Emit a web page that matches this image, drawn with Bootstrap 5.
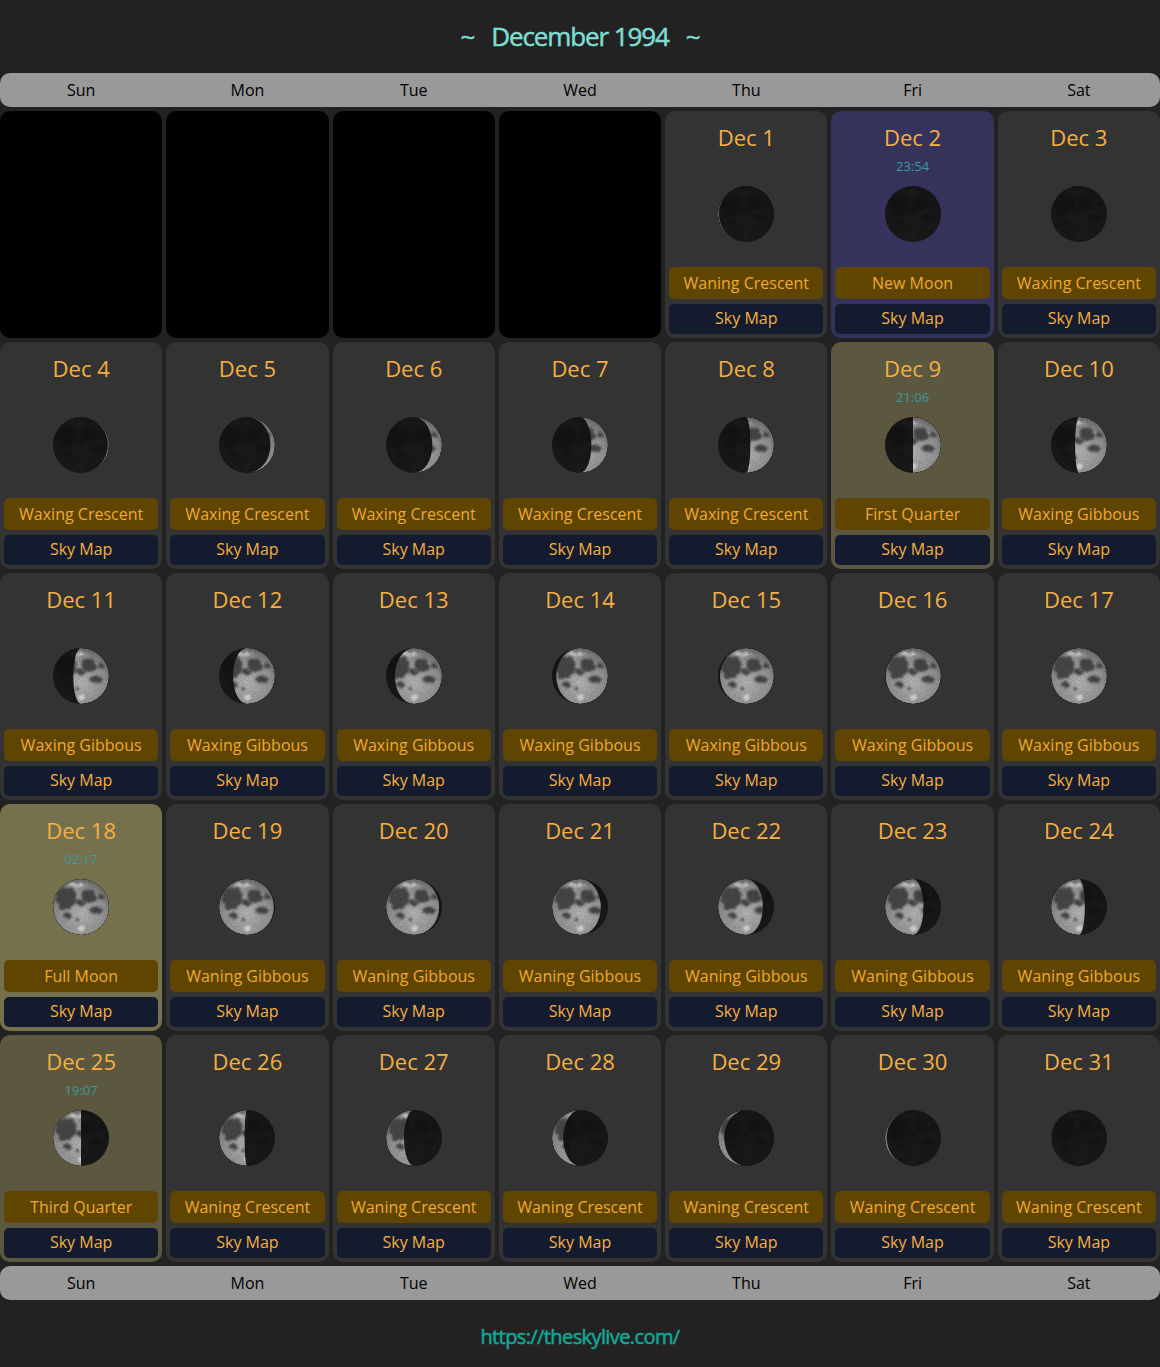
<!DOCTYPE html>
<html lang="en">
<head>
    <meta charset="UTF-8">
    <meta name="viewport" content="width=device-width, initial-scale=1.0">
    <title>Moon Phases December 1994</title>
    <link href="https://cdn.jsdelivr.net/npm/bootstrap@5.3.0/dist/css/bootstrap.min.css" rel="stylesheet">
    <style>
        body {
            background-color: #222;
            font-family: "Open Sans", "Noto Sans", sans-serif;
            font-size: 16px;
            overflow-x: hidden;
        }
        .cal-title {
            height: 73px;
            margin: 0;
            color: #7fdcd3;
            font-size: 26px;
            font-weight: 400;
            letter-spacing: -1.1px;
            -webkit-text-stroke: 0.5px #7fdcd3;
        }
        .cal-title span { margin: 0 17px; }
        .week-bar {
            display: grid;
            grid-template-columns: repeat(7, 1fr);
            gap: 4px;
            height: 34px;
            background-color: #999;
            border-radius: 10px;
            color: #000;
            line-height: 34px;
            text-align: center;
        }
        .month-grid {
            display: grid;
            grid-template-columns: repeat(7, 1fr);
            grid-auto-rows: 227px;
            gap: 4px;
            margin: 4px 0;
        }
        .day-box {
            display: flex;
            flex-direction: column;
            padding: 4px;
            background-color: #333;
            border-radius: 10px;
            text-align: center;
        }
        .day-box.blank { background-color: #000; }
        .day-box.new-moon { background-color: #35335c; }
        .day-box.quarter { background-color: #5c5840; }
        .day-box.full-moon { background-color: #75714d; }
        .day-date {
            margin-top: 5px;
            height: 34px;
            color: #f5b041;
            font-size: 22px;
            line-height: 34px;
        }
        .day-time {
            height: 30px;
            color: #3a9a9c;
            font-size: 13px;
            line-height: 24px;
        }
        .moon-pic {
            display: block;
            width: 56px;
            height: 56px;
            margin: 2px auto 0;
        }
        .phase-name {
            height: 32px;
            margin-bottom: 5px;
            background-color: #5f4500;
            border-radius: 5px;
            color: #f0aa2e;
            line-height: 32px;
        }
        .map-btn {
            height: 30px;
            padding: 0;
            background-color: #141b2e;
            border: 0;
            border-radius: 5px;
            color: #f5b041;
            font-size: 16px;
            line-height: 28px;
        }
        .map-btn:hover { background-color: #1d2640; color: #f5b041; }
        .site-link {
            height: 67px;
            padding-top: 6px;
            color: #14a899;
            font-size: 20px;
            letter-spacing: -0.6px;
            -webkit-text-stroke: 0.5px #14a899;
            text-decoration: none;
        }
    </style>
</head>
<body>
    <svg width="0" height="0" class="d-block" aria-hidden="true">
        <defs>
            <filter id="grain" x="0" y="0" width="100%" height="100%">
                <feTurbulence type="fractalNoise" baseFrequency="0.9" numOctaves="2" seed="4" result="noise"/>
                <feColorMatrix in="noise" type="matrix" values="0 0 0 0 0  0 0 0 0 0  0 0 0 0 0  0 0 0 0.7 -0.26" result="spots"/>
                <feComposite in="spots" in2="SourceGraphic" operator="in" result="clipped"/>
                <feMerge>
                    <feMergeNode in="SourceGraphic"/>
                    <feMergeNode in="clipped"/>
                </feMerge>
            </filter>
            <filter id="soft" x="-30%" y="-30%" width="160%" height="160%">
                <feTurbulence type="fractalNoise" baseFrequency="0.18" numOctaves="2" seed="9" result="warp"/>
                <feDisplacementMap in="SourceGraphic" in2="warp" scale="6" xChannelSelector="R" yChannelSelector="G" result="rough"/>
                <feGaussianBlur in="rough" stdDeviation="1.2"/>
            </filter>
            <filter id="edge"><feGaussianBlur stdDeviation="0.5"/></filter>
            <radialGradient id="limb" cx="50%" cy="62%" r="58%">
                <stop offset="0" stop-color="#b4b4b4"/>
                <stop offset="0.75" stop-color="#929292"/>
                <stop offset="1" stop-color="#727272"/>
            </radialGradient>
            <clipPath id="disc"><circle cx="28" cy="28" r="28"/></clipPath>
            <g id="moonFace" clip-path="url(#disc)">
                <g filter="url(#grain)">
                    <circle cx="28" cy="28" r="28" fill="url(#limb)"/>
                    <g fill="#474747" filter="url(#soft)">
                        <ellipse cx="13" cy="19" rx="10" ry="11"/>
                        <ellipse cx="27" cy="24" rx="5" ry="3"/>
                        <ellipse cx="36" cy="17" rx="7" ry="7"/>
                        <ellipse cx="48" cy="18" rx="2.8" ry="3.2"/>
                        <ellipse cx="43" cy="31" rx="6.5" ry="3.6"/>
                        <ellipse cx="15" cy="37" rx="5" ry="2.6"/>
                        <ellipse cx="24" cy="40" rx="2" ry="1.5"/>
                    </g>
                    <g fill="#d4d4d4" filter="url(#soft)">
                        <circle cx="29" cy="50" r="3"/>
                        <ellipse cx="24" cy="6" rx="9" ry="1.6"/>
                    </g>
                </g>
            </g>
        </defs>
    </svg>

    <h1 class="cal-title d-flex align-items-center justify-content-center"><span>~</span>December 1994<span>~</span></h1>

    <div class="week-bar" id="weekTop"></div>
    <div class="month-grid" id="monthGrid"></div>
    <div class="week-bar" id="weekBottom"></div>

    <a class="site-link d-flex align-items-center justify-content-center" href="https://theskylive.com/">https://theskylive.com/</a>

    <script src="https://cdn.jsdelivr.net/npm/bootstrap@5.3.0/dist/js/bootstrap.bundle.min.js"></script>
    <script>
        const dayNames = ['Sun', 'Mon', 'Tue', 'Wed', 'Thu', 'Fri', 'Sat'];
        const weekHtml = dayNames.map(d => `<div>${d}</div>`).join('');
        document.getElementById('weekTop').innerHTML = weekHtml;
        document.getElementById('weekBottom').innerHTML = weekHtml;

        // phase angle of each day: 0 new, 90 first quarter, 180 full, 270 third quarter
        const angles = [346, 0, 4, 16, 33, 49, 66, 81, 90, 98, 106, 120, 133, 148, 158, 168, 176, 180,
            196, 206, 222, 233, 248, 258, 270, 275, 291, 307, 321, 340, 352];
        const names = {
            2: { time: '23:54', cls: 'new-moon', name: 'New Moon' },
            9: { time: '21:06', cls: 'quarter', name: 'First Quarter' },
            18: { time: '02:17', cls: 'full-moon', name: 'Full Moon' },
            25: { time: '19:07', cls: 'quarter', name: 'Third Quarter' }
        };

        function phaseName(a) {
            if (a < 90) return 'Waxing Crescent';
            if (a < 180) return 'Waxing Gibbous';
            if (a < 270) return 'Waning Gibbous';
            return 'Waning Crescent';
        }

        // lit part of the disc, limb half plus elliptical terminator
        function litPath(a) {
            const rx = Math.abs(Math.cos(a * Math.PI / 180)) * 28;
            const waxing = a <= 180;
            const crescent = a < 90 || a > 270;
            const limbSweep = waxing ? 1 : 0;
            const termSweep = waxing ? (crescent ? 0 : 1) : (crescent ? 1 : 0);
            return `M28 0A28 28 0 0 ${limbSweep} 28 56A${rx.toFixed(2)} 28 0 0 ${termSweep} 28 0Z`;
        }

        let html = '';
        for (let i = 0; i < 4; i++) html += '<div class="day-box blank"></div>';
        angles.forEach((a, idx) => {
            const day = idx + 1;
            const info = names[day] || {};
            html += `
                <div class="day-box ${info.cls || ''}">
                    <div class="day-date">Dec ${day}</div>
                    <div class="day-time">${info.time || ''}</div>
                    <svg class="moon-pic" viewBox="0 0 56 56" role="img" aria-label="Moon, day ${day}">
                        <mask id="lit${day}" maskUnits="userSpaceOnUse" x="0" y="0" width="56" height="56">
                            <path d="${litPath(a)}" fill="#fff" filter="url(#edge)"/>
                        </mask>
                        <circle cx="28" cy="28" r="28" fill="#0f0f10"/>
                        <use href="#moonFace" opacity="0.06"/>
                        <g mask="url(#lit${day})"><use href="#moonFace"/></g>
                    </svg>
                    <div class="phase-name mt-auto">${info.name || phaseName(a)}</div>
                    <a href="#" class="btn map-btn">Sky Map</a>
                </div>`;
        });
        document.getElementById('monthGrid').innerHTML = html;
    </script>
</body>
</html>
